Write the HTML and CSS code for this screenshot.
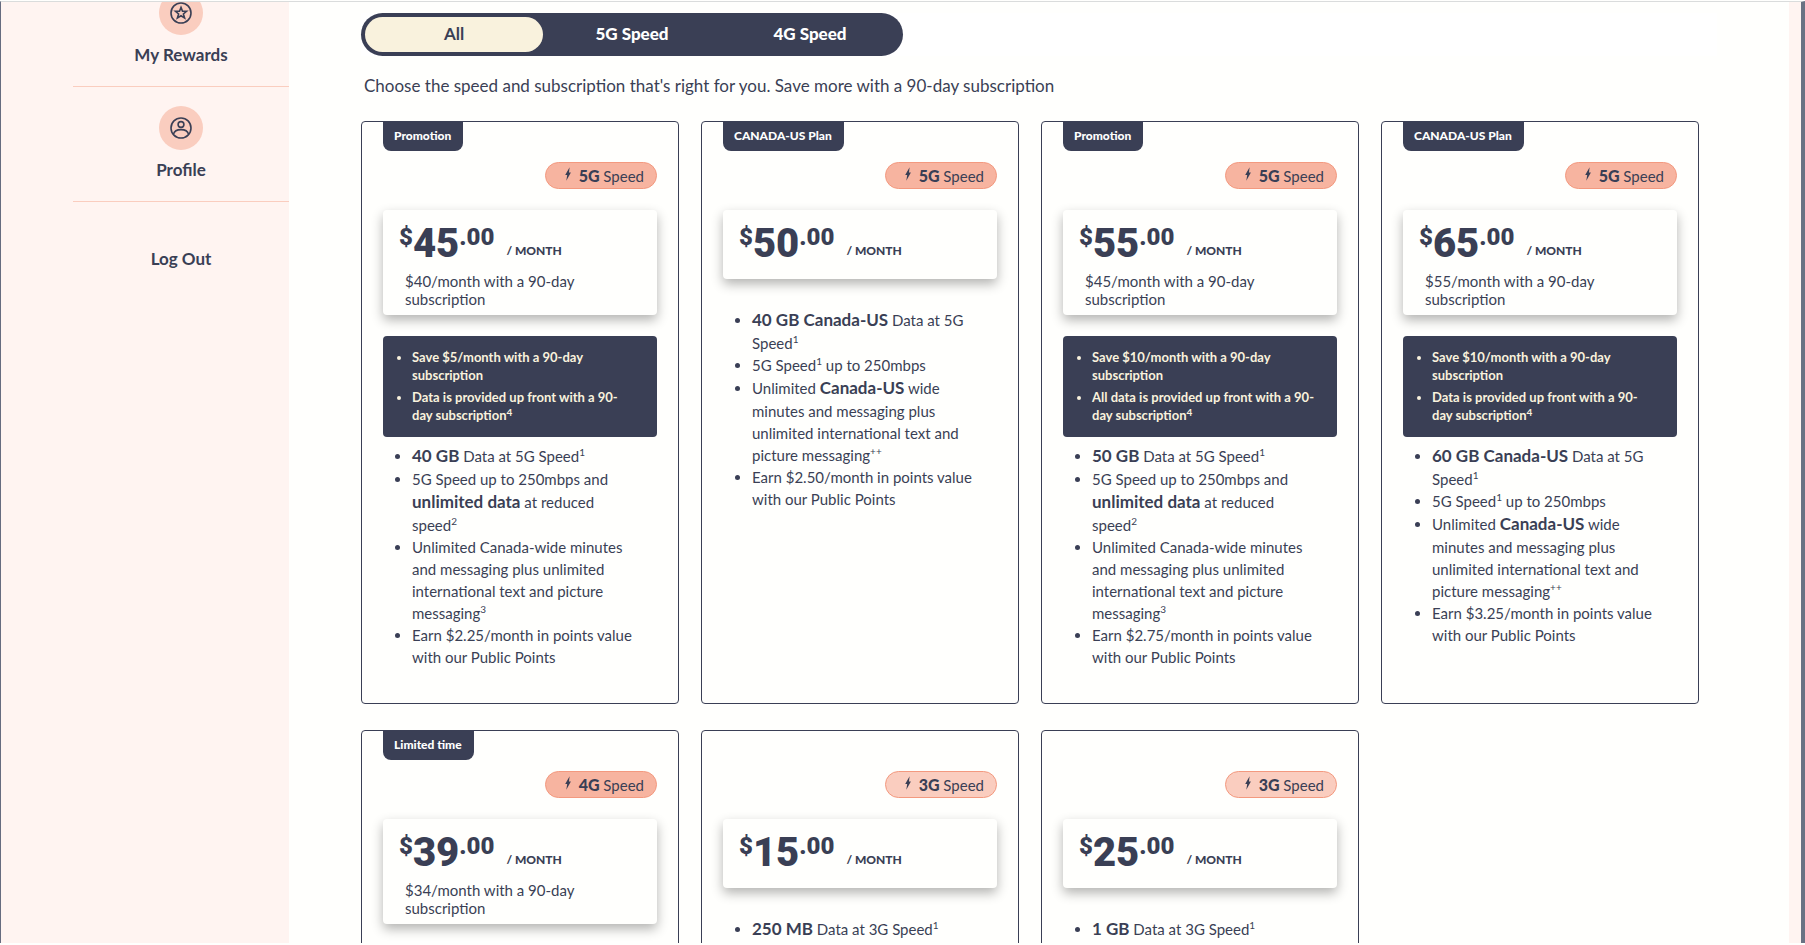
FILE: index.html
```html
<!DOCTYPE html>
<html lang="en">
<head>
<meta charset="utf-8">
<title>Choose a plan</title>
<link rel="stylesheet" href="styles.css">
</head>
<body>
<svg class="defs" aria-hidden="true"><symbol id="bolt" viewBox="0 0 6 14"><path d="M4.6 0.300 0.200 8h2L1.300 13.700 5.900 5.600H4z"/></symbol></svg>
<div class="frame">
  <nav class="sidebar" aria-label="Account">
    <a class="nav-item" href="#rewards">
      <span class="nav-icon"><svg viewBox="0 0 22 22"><circle cx="11" cy="11" r="10"/><path d="M11 5.400l1.500 3.900h4l-3.100 2.600 1.200 4L11 13.700l-3.600 2.200 1.200-4-3.100-2.600h4z"/></svg></span>
      My Rewards
    </a>
    <a class="nav-item" href="#profile">
      <span class="nav-icon"><svg viewBox="0 0 22 22"><circle cx="11" cy="11" r="10"/><circle cx="11" cy="7.500" r="2.900"/><path d="M3.400 17.400C4.200 14.300 7.300 12.600 11 12.600s6.800 1.700 7.600 4.800"/></svg></span>
      Profile
    </a>
    <a class="nav-logout" href="#logout">Log Out</a>
  </nav>
  <main class="main">
    <div class="filter-row">
      <div class="tabs">
        <button class="tab tab-active" type="button" aria-pressed="true">All</button>
        <button class="tab" type="button">5G Speed</button>
        <button class="tab" type="button">4G Speed</button>
      </div>
    </div>
    <p class="intro">Choose the speed and subscription that's right for you. Save more with a 90-day subscription</p>
    <div class="plans">
      <article class="plan">
        <span class="tag">Promotion</span>
        <span class="speed"><svg class="bolt"><use href="#bolt"/></svg><span><b>5G</b> Speed</span></span>
        <div class="price">
          <p class="amount"><span class="minor">$</span><span class="major">45</span><span class="minor">.00</span><span class="per">/ MONTH</span></p>
          <p class="offer">$40/month with a 90-day subscription</p>
        </div>
        <ul class="perks"><li>Save $5/month with a 90-day subscription</li><li>Data is provided up front with a 90-day subscription<sup>4</sup></li></ul>
        <ul class="features">
          <li><b>40 GB</b> Data at 5G Speed<sup>1</sup></li>
          <li>5G Speed up to 250mbps and <b>unlimited data</b> at reduced speed<sup>2</sup></li>
          <li>Unlimited Canada-wide minutes and messaging plus unlimited international text and picture messaging<sup>3</sup></li>
          <li>Earn $2.25/month in points value with our Public Points</li>
        </ul>
      </article>
      <article class="plan">
        <span class="tag">CANADA-US Plan</span>
        <span class="speed"><svg class="bolt"><use href="#bolt"/></svg><span><b>5G</b> Speed</span></span>
        <div class="price">
          <p class="amount"><span class="minor">$</span><span class="major">50</span><span class="minor">.00</span><span class="per">/ MONTH</span></p>
        </div>
        <ul class="features">
          <li><b>40 GB Canada-US</b> Data at 5G Speed<sup>1</sup></li>
          <li>5G Speed<sup>1</sup> up to 250mbps</li>
          <li>Unlimited <b>Canada-US</b> wide minutes and messaging plus unlimited international text and picture messaging<sup>++</sup></li>
          <li>Earn $2.50/month in points value with our Public Points</li>
        </ul>
      </article>
      <article class="plan">
        <span class="tag">Promotion</span>
        <span class="speed"><svg class="bolt"><use href="#bolt"/></svg><span><b>5G</b> Speed</span></span>
        <div class="price">
          <p class="amount"><span class="minor">$</span><span class="major">55</span><span class="minor">.00</span><span class="per">/ MONTH</span></p>
          <p class="offer">$45/month with a 90-day subscription</p>
        </div>
        <ul class="perks"><li>Save $10/month with a 90-day subscription</li><li>All data is provided up front with a 90-day subscription<sup>4</sup></li></ul>
        <ul class="features">
          <li><b>50 GB</b> Data at 5G Speed<sup>1</sup></li>
          <li>5G Speed up to 250mbps and <b>unlimited data</b> at reduced speed<sup>2</sup></li>
          <li>Unlimited Canada-wide minutes and messaging plus unlimited international text and picture messaging<sup>3</sup></li>
          <li>Earn $2.75/month in points value with our Public Points</li>
        </ul>
      </article>
      <article class="plan">
        <span class="tag">CANADA-US Plan</span>
        <span class="speed"><svg class="bolt"><use href="#bolt"/></svg><span><b>5G</b> Speed</span></span>
        <div class="price">
          <p class="amount"><span class="minor">$</span><span class="major">65</span><span class="minor">.00</span><span class="per">/ MONTH</span></p>
          <p class="offer">$55/month with a 90-day subscription</p>
        </div>
        <ul class="perks"><li>Save $10/month with a 90-day subscription</li><li>Data is provided up front with a 90-day subscription<sup>4</sup></li></ul>
        <ul class="features">
          <li><b>60 GB Canada-US</b> Data at 5G Speed<sup>1</sup></li>
          <li>5G Speed<sup>1</sup> up to 250mbps</li>
          <li>Unlimited <b>Canada-US</b> wide minutes and messaging plus unlimited international text and picture messaging<sup>++</sup></li>
          <li>Earn $3.25/month in points value with our Public Points</li>
        </ul>
      </article>
      <article class="plan">
        <span class="tag">Limited time</span>
        <span class="speed"><svg class="bolt"><use href="#bolt"/></svg><span><b>4G</b> Speed</span></span>
        <div class="price">
          <p class="amount"><span class="minor">$</span><span class="major">39</span><span class="minor">.00</span><span class="per">/ MONTH</span></p>
          <p class="offer">$34/month with a 90-day subscription</p>
        </div>
      </article>
      <article class="plan">
        <span class="speed speed-light"><svg class="bolt"><use href="#bolt"/></svg><span><b>3G</b> Speed</span></span>
        <div class="price">
          <p class="amount"><span class="minor">$</span><span class="major">15</span><span class="minor">.00</span><span class="per">/ MONTH</span></p>
        </div>
        <ul class="features"><li><b>250 MB</b> Data at 3G Speed<sup>1</sup></li></ul>
      </article>
      <article class="plan">
        <span class="speed speed-light"><svg class="bolt"><use href="#bolt"/></svg><span><b>3G</b> Speed</span></span>
        <div class="price">
          <p class="amount"><span class="minor">$</span><span class="major">25</span><span class="minor">.00</span><span class="per">/ MONTH</span></p>
        </div>
        <ul class="features"><li><b>1 GB</b> Data at 3G Speed<sup>1</sup></li></ul>
      </article>
    </div>
  </main>
</div>
</body>
</html>
```
FILE: styles.css
```css
* { box-sizing: border-box; }
body {
  margin: 0;
  height: 100vh;
  overflow: hidden;
  padding: 1px 0 2px;
  background: #fffffd;
  color: #3a3f55;
  font-family: Lato, "Open Sans", sans-serif;
  font-size: 15px;
}
p, ul { margin: 0; padding: 0; }
.defs { display: none; }
.frame {
  display: flex;
  height: 100%;
  overflow: hidden;
  background: #fff4f1;
  border-top: 1px solid #dadcdc;
  border-left: 1px solid #666c80;
  border-right: 4px solid #697183;
}
.sidebar {
  flex: 0 0 288px;
  padding-left: 72px;
  margin-top: -30px;
  text-align: center;
}
.nav-item, .nav-logout {
  color: inherit;
  text-decoration: none;
  font-size: 17px;
  font-weight: 700;
  line-height: 24px;
}
.nav-item {
  display: flex;
  flex-direction: column;
  align-items: center;
  gap: 8px;
  height: 115px;
  padding-top: 19px;
  border-bottom: 1px solid #facdbf;
}
.nav-icon {
  display: flex;
  align-items: center;
  justify-content: center;
  width: 44px;
  height: 44px;
  border-radius: 50%;
  background: #facdbf;
}
.nav-icon svg {
  width: 22px;
  height: 22px;
  fill: none;
  stroke: #3a3f55;
  stroke-width: 1.6;
}
.nav-logout { display: block; padding-top: 45px; }
.main {
  flex: 1;
  min-width: 0;
  margin-right: 12px;
  padding: 11px 72px 0;
  background: #fffffd;
}
.filter-row { background: #fff; }
.tabs {
  display: grid;
  grid-template-columns: repeat(3, 1fr);
  width: 542px;
  max-width: 100%;
  padding: 4px;
  border-radius: 22px;
  background: #3a3f55;
}
.tab {
  height: 35px;
  padding: 0 6px 2px;
  border: 0;
  border-radius: 18px;
  background: none;
  color: #fff;
  font: 900 17px/24px Lato, sans-serif;
}
.tab-active { background: #f9f2dd; color: #3a3f55; font-weight: 700; }
.intro { padding: 18px 3px 23px; font-size: 17px; line-height: 24px; }
.plans {
  display: grid;
  grid-template-columns: repeat(4, 1fr);
  gap: 26px 22px;
  padding-right: 18px;
}
.plan {
  position: relative;
  display: flex;
  flex-direction: column;
  min-height: 583px;
  padding: 40px 21px 34px;
  border: 1px solid #3a3f55;
  border-radius: 4px;
}
.tag {
  position: absolute;
  top: 0;
  left: 21px;
  padding: 4px 12px 5px 11px;
  border-radius: 0 0 8px 8px;
  background: #3a3f55;
  color: #fff;
  font-size: 12px;
  font-weight: 900;
  line-height: 20px;
}
.speed {
  display: flex;
  align-items: center;
  align-self: flex-end;
  gap: 8px;
  height: 27px;
  padding: 0 12px 0 19px;
  border: 1px solid #f3997f;
  border-radius: 14px;
  background: #f7b4a0;
  font-size: 15px;
}
.speed-light { background: #facdbf; }
.speed b { font-size: 16px; font-weight: 900; }
.bolt { width: 6px; height: 14px; margin-bottom: 4px; fill: #3a3f55; }
.price {
  margin-top: 21px;
  min-height: 69px;
  padding: 11px 16px 7px;
  border-radius: 4px;
  background: #fffffd;
  box-shadow: 0 5px 12px rgba(0, 0, 0, 0.3);
}
.amount { display: flex; line-height: 46px; height: 46px; }
.major, .minor { font-family: Roboto, sans-serif; font-weight: 900; }
.major { font-size: 40px; }
.minor { font-size: 24px; line-height: 32px; }
.per { margin-left: 12px; font-size: 12px; font-weight: 900; line-height: 60px; }
.offer { padding: 5px 6px 0; line-height: 18px; }
.perks {
  margin-top: 21px;
  padding: 12px 20px 13px 29px;
  border-radius: 4px;
  background: #3a3f55;
  color: #f9f2dd;
  font-size: 13px;
  font-weight: 700;
  line-height: 18px;
}
.perks li + li { margin-top: 4px; }
.features { padding: 7px 20px 0 29px; line-height: 22px; }
.price + .features { padding-top: 29px; }
.features b { font-size: 17px; line-height: 24px; }
sup { font-size: 10px; line-height: 10px; vertical-align: text-top; }
```
